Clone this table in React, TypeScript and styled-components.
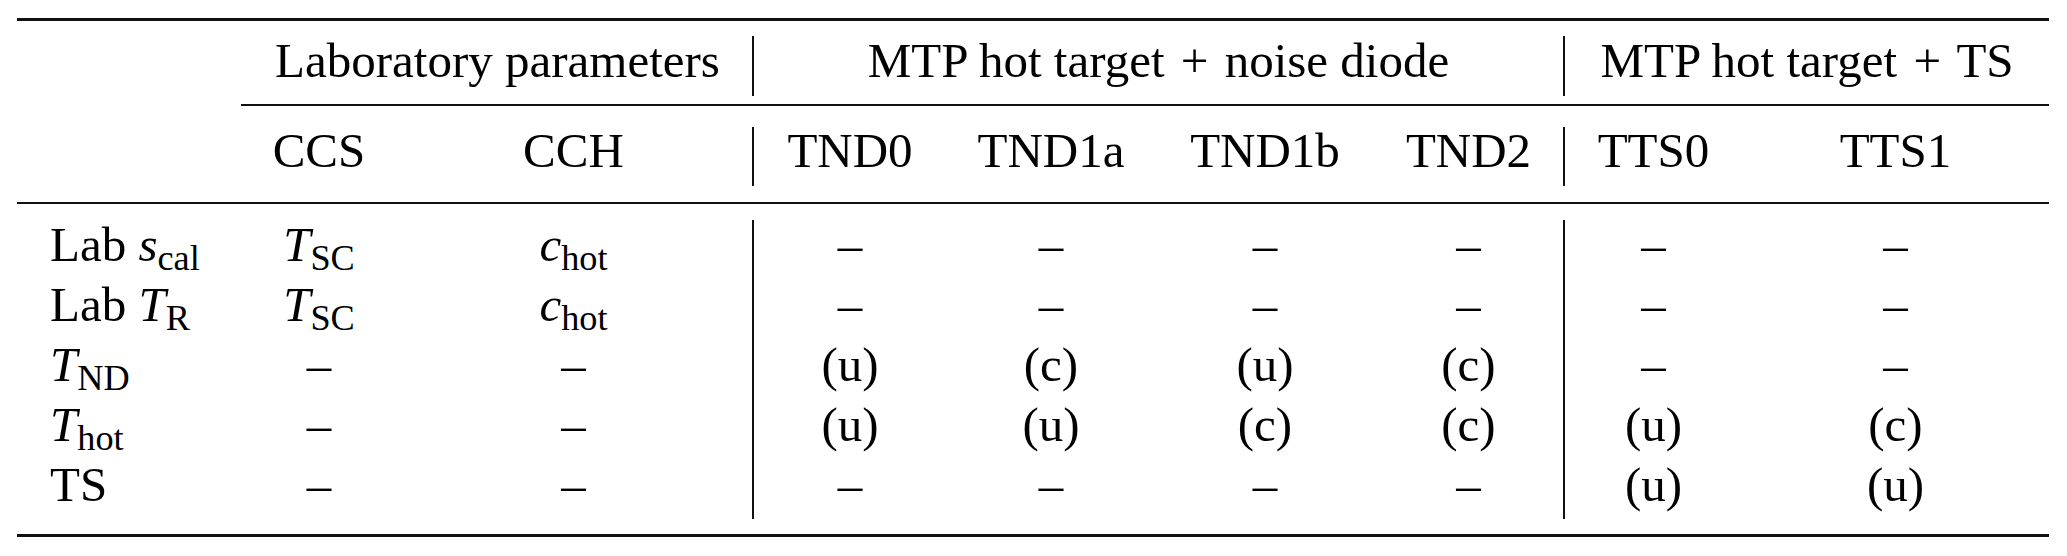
import React from 'react';
import styled, { createGlobalStyle } from 'styled-components';

const GlobalStyle = createGlobalStyle`
  html, body {
    margin: 0;
    padding: 0;
    background: #ffffff;
  }
  body {
    font-family: "Liberation Serif", "Times New Roman", serif;
    color: #000000;
  }
`;

// label | CCS | CCH | bar | TND0 | TND1a | TND1b | TND2 | bar | TTS0 | TTS1
const COLUMNS = '226px 152px 357px 2px 192px 210px 218px 189px 2px 177px 307px';

const Table = styled.div`
  width: 2032px;
  margin: 18px 0 0 17px;
  font-size: 49px;
  line-height: 60px;
`;

const Rule = styled.div<{ weight: number; inset?: number }>`
  height: ${(p) => p.weight}px;
  margin-left: ${(p) => p.inset ?? 0}px;
  background: #111111;
`;

const Section = styled.div<{ height: number; padTop: number }>`
  display: grid;
  grid-template-columns: ${COLUMNS};
  grid-auto-rows: 60px;
  box-sizing: border-box;
  height: ${(p) => p.height}px;
  padding-top: ${(p) => p.padTop}px;
`;

const Cell = styled.div<{ span?: number; left?: boolean }>`
  grid-column: span ${(p) => p.span ?? 1};
  text-align: ${(p) => (p.left ? 'left' : 'center')};
  padding-left: ${(p) => (p.left ? '33px' : '0')};
  white-space: nowrap;
`;

const Bar = styled.div<{ col: number; rows: number; offset: number; length: number }>`
  grid-column: ${(p) => p.col};
  grid-row: 1 / span ${(p) => p.rows};
  align-self: start;
  margin-top: ${(p) => p.offset}px;
  height: ${(p) => p.length}px;
  background: #111111;
`;

const Italic = styled.span`
  font-style: italic;
`;

const Sub = styled.span`
  font-size: 0.74em;
  line-height: 1;
  vertical-align: -9px;
`;

const Plus = styled.span`
  margin: 0 4px;
`;

function Sym({ base, sub, prefix }: { base: string; sub: string; prefix?: string }) {
  return (
    <span>
      {prefix}
      <Italic>{base}</Italic>
      <Sub>{sub}</Sub>
    </span>
  );
}

const D = '–';

const rows: { label: React.ReactNode; cells: React.ReactNode[] }[] = [
  {
    label: <Sym prefix="Lab " base="s" sub="cal" />,
    cells: [<Sym base="T" sub="SC" />, <Sym base="c" sub="hot" />, D, D, D, D, D, D],
  },
  {
    label: <Sym prefix="Lab " base="T" sub="R" />,
    cells: [<Sym base="T" sub="SC" />, <Sym base="c" sub="hot" />, D, D, D, D, D, D],
  },
  {
    label: <Sym base="T" sub="ND" />,
    cells: [D, D, '(u)', '(c)', '(u)', '(c)', D, D],
  },
  {
    label: <Sym base="T" sub="hot" />,
    cells: [D, D, '(u)', '(u)', '(c)', '(c)', '(u)', '(c)'],
  },
  {
    label: 'TS',
    cells: [D, D, D, D, D, D, '(u)', '(u)'],
  },
];

const subHeads = ['CCS', 'CCH', 'TND0', 'TND1a', 'TND1b', 'TND2', 'TTS0', 'TTS1'];

export default function App() {
  return (
    <>
      <GlobalStyle />
      <Table>
        <Rule weight={3} />

        <Section height={83} padTop={10}>
          <Bar col={4} rows={1} offset={5} length={60} />
          <Bar col={9} rows={1} offset={5} length={60} />
          <Cell />
          <Cell span={2}>Laboratory parameters</Cell>
          <Cell span={4}>
            MTP hot target <Plus>+</Plus> noise diode
          </Cell>
          <Cell span={2}>
            MTP hot target <Plus>+</Plus> TS
          </Cell>
        </Section>

        <Rule weight={2} inset={224} />

        <Section height={96} padTop={15}>
          <Bar col={4} rows={1} offset={6} length={59} />
          <Bar col={9} rows={1} offset={6} length={59} />
          <Cell />
          {subHeads.map((h) => (
            <Cell key={h}>{h}</Cell>
          ))}
        </Section>

        <Rule weight={2} />

        <Section height={330} padTop={11}>
          <Bar col={4} rows={5} offset={5} length={299} />
          <Bar col={9} rows={5} offset={5} length={299} />
          {rows.map((row, i) => (
            <React.Fragment key={i}>
              <Cell left>{row.label}</Cell>
              {row.cells.map((c, j) => (
                <Cell key={j}>{c}</Cell>
              ))}
            </React.Fragment>
          ))}
        </Section>

        <Rule weight={3} />
      </Table>
    </>
  );
}
